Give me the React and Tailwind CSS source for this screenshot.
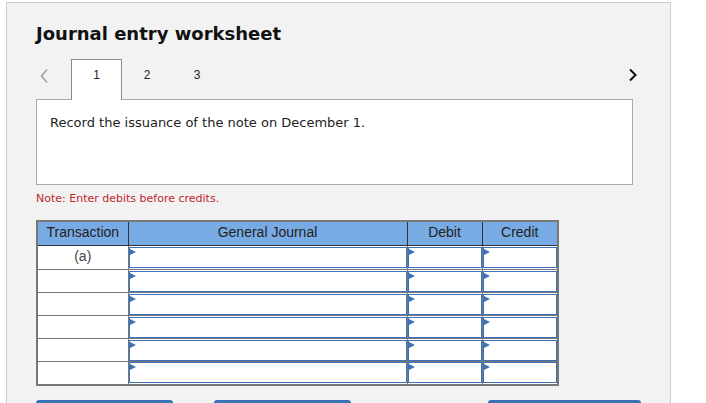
import React from "react";

const rows = ["(a)", "", "", "", "", ""];

function EntryCell() {
  return (
    <td className="border border-[#777] p-0 bg-white">
      <div className="relative h-[21px] border border-[#3d72b6] bg-white">
        <span className="absolute left-0 top-[1px] h-0 w-0 border-y-[3.5px] border-l-[6px] border-y-transparent border-l-[#3d72b6]" />
      </div>
    </td>
  );
}

export default function App() {
  return (
    <div className="min-h-screen bg-white pt-[2px] pl-[6px]">
      <div className="w-[665px] border border-[#cccccc] bg-[#f2f2f2] pl-[29px] pt-[20px] pb-[40px]">
        <h1 className="text-[18px] leading-[22px] font-bold text-[#111]" style={{ fontFamily: '"DejaVu Sans", Verdana, sans-serif' }}>
          Journal entry worksheet
        </h1>

        {/* step tabs */}
        <div className="mt-[14px] flex w-[604px] items-center h-[40px]" style={{ fontFamily: '"Liberation Sans", Arial, sans-serif' }}>
          <div className="w-[35px] h-full flex items-center pl-[3px]">
            <svg width="10" height="16" viewBox="0 0 10 16" className="mt-[-6px]">
              <path d="M8 1.5 L2.5 8 L8 14.5" fill="none" stroke="#a0a0a0" strokeWidth="1.6" />
            </svg>
          </div>
          <div className="relative z-10 mb-[-1px] h-[41px] w-[51px] self-start border border-b-0 border-[#8a8a8a] bg-white flex justify-center pt-[6px] text-[12px] text-[#222]">
            1
          </div>
          <div className="w-[50px] h-full flex justify-center pt-[7px] text-[12px] text-[#222]">2</div>
          <div className="w-[50px] h-full flex justify-center pt-[7px] text-[12px] text-[#222]">3</div>
          <div className="flex-1" />
          <div className="h-full flex items-center pr-[2px]">
            <svg width="10" height="14" viewBox="0 0 10 14" className="mt-[-8px]">
              <path d="M2 1.5 L7.5 7 L2 12.5" fill="none" stroke="#111" strokeWidth="2" />
            </svg>
          </div>
        </div>

        <div className="w-[597px] h-[86px] border border-[#aaaaaa] bg-white pl-[13px] pt-[15px] text-[13px] leading-[16px] text-[#222]" style={{ fontFamily: '"DejaVu Sans", Verdana, sans-serif' }}>
          Record the issuance of the note on December 1.
        </div>

        <p className="mt-[7px] text-[11px] leading-[14px] text-[#c1272d]" style={{ fontFamily: '"DejaVu Sans", Verdana, sans-serif' }}>
          Note: Enter debits before credits.
        </p>

        <table className="mt-[14px] w-[521px] table-fixed border-collapse border-2 border-[#777]" style={{ fontFamily: '"Liberation Sans", Arial, sans-serif' }}>
          <colgroup>
            <col className="w-[91px]" />
            <col className="w-[279px]" />
            <col className="w-[75px]" />
            <col className="w-[76px]" />
          </colgroup>
          <thead>
            <tr className="h-[24px] bg-[#78aae3] text-[14px] text-[#222]">
              <th className="border border-[#333] border-t-[#777] border-l-[#777] font-normal p-0 pb-[2px]">Transaction</th>
              <th className="border border-[#333] border-t-[#777] font-normal p-0 pb-[2px]">General Journal</th>
              <th className="border border-[#333] border-t-[#777] font-normal p-0 pb-[2px]">Debit</th>
              <th className="border border-[#333] border-t-[#777] border-r-[#777] font-normal p-0 pb-[2px]">Credit</th>
            </tr>
          </thead>
          <tbody>
            {rows.map((label, i) => (
              <tr key={i} className="h-[23px]">
                <td className="border border-[#777] bg-white p-0 pb-[2px] text-center text-[14px] text-[#444]">{label}</td>
                <EntryCell />
                <EntryCell />
                <EntryCell />
              </tr>
            ))}
          </tbody>
        </table>

        {/* action buttons */}
        <div className="mt-[14px] flex w-[605px]">
          <button className="h-[32px] w-[137px] rounded-t-[3px] bg-[#3a72b6]" />
          <button className="ml-[41px] h-[32px] w-[137px] rounded-t-[3px] bg-[#3a72b6]" />
          <div className="flex-1" />
          <button className="h-[32px] w-[153px] rounded-t-[3px] bg-[#3a72b6]" />
        </div>
      </div>
    </div>
  );
}
